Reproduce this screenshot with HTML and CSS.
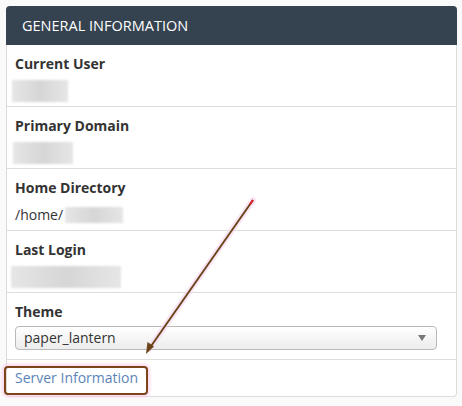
FILE: index.html
```html
<!DOCTYPE html>
<html>
<head>
<meta charset="utf-8">
<link rel="stylesheet" href="styles.css">
</head>
<body>
<div class="page">
  <div class="panel">
    <div class="panel-heading">GENERAL INFORMATION</div>
    <div class="row">
      <div class="label">Current User</div>
      <div class="value"><span class="blur b1"></span></div>
    </div>
    <div class="row">
      <div class="label">Primary Domain</div>
      <div class="value"><span class="blur b2"></span></div>
    </div>
    <div class="row">
      <div class="label">Home Directory</div>
      <div class="value text">/home/<span class="blur b3"></span></div>
    </div>
    <div class="row">
      <div class="label">Last Login</div>
      <div class="value"><span class="blur b4"></span></div>
    </div>
    <div class="row theme">
      <div class="label">Theme</div>
      <div class="select"><span>paper_lantern</span><span class="caret"></span></div>
    </div>
    <div class="footer">
      <a class="link">Server Information</a>
    </div>
  </div>
  <div class="highlight"></div>
  <svg class="arrow" width="462" height="406" viewBox="0 0 462 406">
    <line x1="253" y1="200" x2="149" y2="349" stroke="#f4d4f0" stroke-width="6" stroke-linecap="round" opacity="0.6"/>
    <line x1="253" y1="200" x2="149" y2="349" stroke="#6a4418" stroke-width="1.9"/>
    <line x1="253" y1="200" x2="250" y2="204.5" stroke="#e0202a" stroke-width="2"/>
    <polygon points="146,354 147.5,342 154,346.5" fill="#6a4418"/>
  </svg>
</div>
</body>
</html>
```
FILE: styles.css
```css
html, body {
  margin: 0;
  padding: 0;
  background: #fafafa;
}
.page {
  position: relative;
  width: 462px;
  height: 406px;
  padding: 6px;
  box-sizing: border-box;
  font-family: "Open Sans", "Liberation Sans", sans-serif;
  font-size: 14px;
  color: #333;
}
.panel {
  width: 449px;
  background: #fff;
  border: 1px solid #dcdcdc;
  border-top: none;
  border-radius: 4px;
}
.panel-heading {
  height: 39px;
  line-height: 40px;
  background: #354250;
  color: #fff;
  padding-left: 16px;
  font-size: 14.5px;
  border-radius: 4px 4px 0 0;
  margin: 0 -1px;
}
.row {
  height: 62px;
  box-sizing: border-box;
  padding: 9px 8px 0;
  border-bottom: 1px solid #dddddd;
}
.label {
  font-weight: 700;
  line-height: 20px;
  height: 20px;
  color: #333;
}
.value {
  margin-top: 6px;
  height: 22px;
  display: flex;
  align-items: center;
}
.value.text {
  line-height: 20px;
}
.blur {
  display: inline-block;
  height: 22px;
  background: linear-gradient(90deg, #e6e6e6, #d6d6d6 50%, #e6e6e6);
  filter: blur(1px);
}
.b1 { width: 56px; margin-left: -3px; }
.b2 { width: 60px; margin-left: -2px; }
.b3 { width: 58px; height: 16px; margin-left: 2px; }
.b4 { width: 110px; margin-left: -4px; }
.theme {
  height: 67px;
}
.select {
  margin-top: 4px;
  height: 22px;
  border: 1px solid #b9b9b9;
  border-radius: 4px;
  background: linear-gradient(#ffffff, #ececec);
  display: flex;
  align-items: center;
  justify-content: space-between;
  padding: 0 10px 0 8px;
  width: 402px;
  color: #333;
  line-height: 20px;
}
.caret {
  width: 0;
  height: 0;
  border-left: 4px solid transparent;
  border-right: 4px solid transparent;
  border-top: 6px solid #777;
}
.footer {
  height: 36px;
  display: flex;
  align-items: center;
  padding-left: 8px;
}
.link {
  color: #5b85b8;
  line-height: 20px;
}
.highlight {
  position: absolute;
  left: 4px;
  top: 366px;
  width: 140px;
  height: 25px;
  border: 2px solid #7a4519;
  border-radius: 4px;
  box-shadow: 0 0 3px 2px rgba(255, 190, 230, 0.6);
}
.arrow {
  position: absolute;
  left: 0;
  top: 0;
  pointer-events: none;
}
```
